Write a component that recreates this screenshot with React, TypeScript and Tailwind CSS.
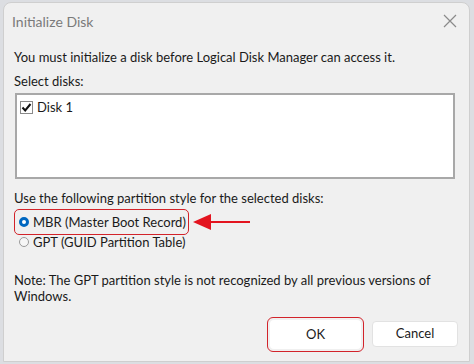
import React from "react";

const font = { fontFamily: 'Lato, "Noto Sans", Arial, sans-serif' };

const Radio = ({ checked }: { checked: boolean }) =>
  checked ? (
    <span className="inline-block w-[10px] h-[10px] rounded-full border-[3px] border-[#0067c0] bg-white shrink-0" />
  ) : (
    <span className="inline-block w-[10px] h-[10px] rounded-full border border-[#9a9a9a] bg-[#f6f6f6] shrink-0" />
  );

const App = () => {
  return (
    <div
      className="w-[474px] h-[364px] bg-[#dcdee2] pt-[2px] pl-[3px] pr-[4px] overflow-hidden"
      style={font}
    >
      <div className="h-[360px] bg-[#f0f0f0] rounded-t-[8px] border border-[#cfcfcf] flex flex-col">
        {/* title bar */}
        <div className="h-[36px] flex items-center justify-between pl-[8px] pr-[10px]">
          <span className="text-[14px] text-[#7a7a7a]">Initialize Disk</span>
          <svg width="14" height="14" viewBox="0 0 14 14" className="mr-[2px]">
            <path d="M1 1 L13 13 M13 1 L1 13" stroke="#8a8a8a" strokeWidth="1.2" />
          </svg>
        </div>

        <div className="pl-[10px] pr-[14px] text-[13px] text-[#1a1a1a] leading-[16px]">
          <p className="mt-[10px]">You must initialize a disk before Logical Disk Manager can access it.</p>
          <p className="mt-[8px]">Select disks:</p>

          <div className="mt-[4px] ml-[1px] w-[440px] h-[86px] bg-white border-2 border-[#a8a8a8] pt-[4px] pl-[3px]">
            <div className="flex items-center gap-[4px]">
              <span className="w-[13px] h-[13px] border border-[#8a8a8a] bg-white flex items-center justify-center">
                <svg width="11" height="11" viewBox="0 0 11 11">
                  <path d="M1.5 5.5 L4.2 8.5 L9.5 2" fill="none" stroke="#111" strokeWidth="2" />
                </svg>
              </span>
              <span>Disk 1</span>
            </div>
          </div>

          <p className="mt-[11px]">Use the following partition style for the selected disks:</p>

          <div className="mt-[3px] flex items-center">
            <div className="w-[175px] h-[26px] border-[1.5px] border-[#d2232a] rounded-[5px] flex items-center gap-[4px] pl-[4px] whitespace-nowrap">
              <Radio checked />
              <span>MBR (Master Boot Record)</span>
            </div>
            <svg width="62" height="20" viewBox="0 0 62 20" className="ml-[3px]">
              <path d="M1 10 L19 2 L19 18 Z" fill="#e3141f" />
              <path d="M18 10 L58 10" stroke="#e3141f" strokeWidth="2" />
            </svg>
          </div>

          <div className="-mt-[1px] flex items-center gap-[4px] pl-[5px]">
            <Radio checked={false} />
            <span>GPT (GUID Partition Table)</span>
          </div>

          <p className="mt-[22px] w-[430px]">Note: The GPT partition style is not recognized by all previous versions of Windows.</p>
        </div>

        <div className="mt-auto mb-[9px] flex justify-end gap-[8px] pr-[11px]">
          <div className="w-[97px] h-[35px] border-[1.5px] border-[#d2232a] rounded-[6px] p-[2px]">
            <button className="w-full h-full bg-white rounded-[4px] text-[13px] text-[#1a1a1a]">OK</button>
          </div>
          <button className="mt-[4px] w-[86px] h-[26px] bg-white border border-[#e2e2e2] rounded-[4px] text-[13px] text-[#1a1a1a]">
            Cancel
          </button>
        </div>
      </div>
    </div>
  );
};

export default App;
